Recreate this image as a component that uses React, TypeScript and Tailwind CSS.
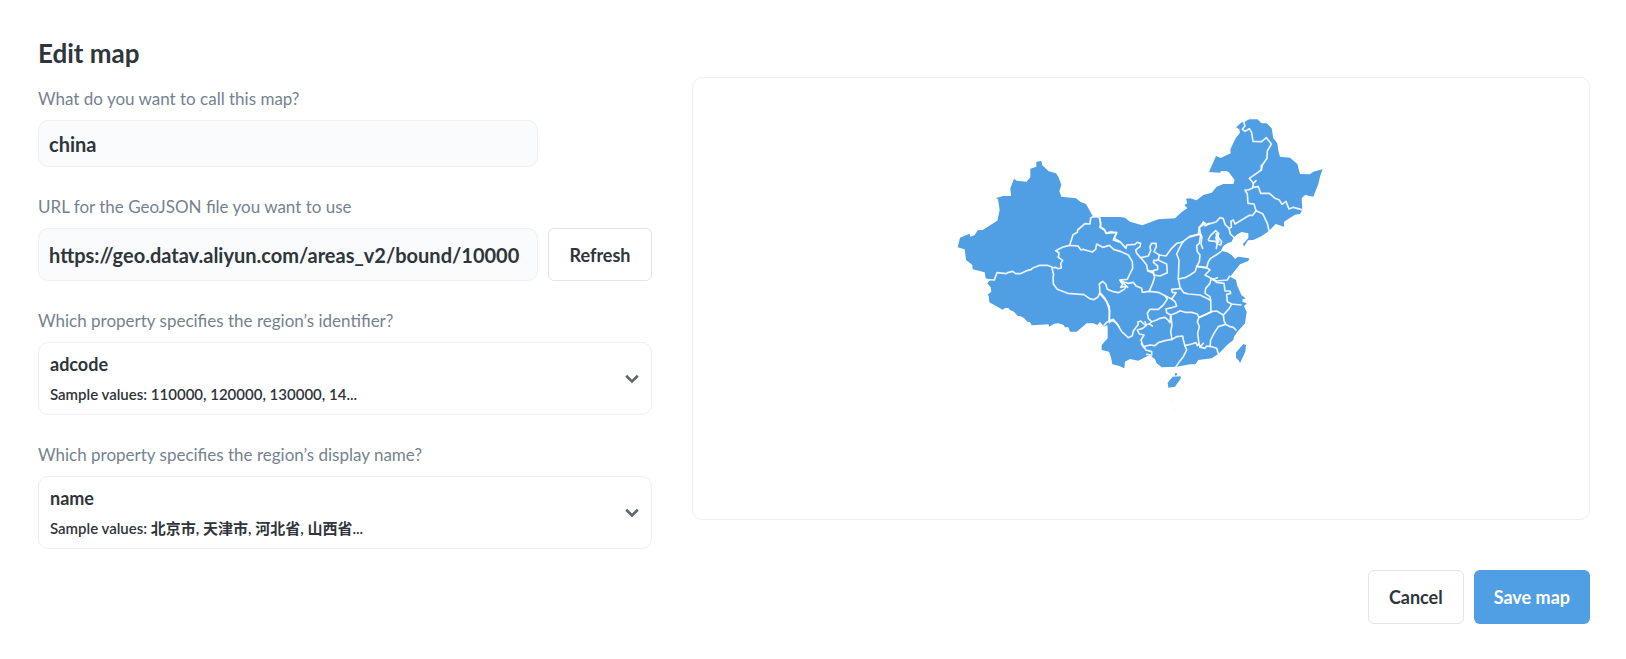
import { useState } from "react";
import type { ReactNode } from "react";

const labelClass = "block text-[17px] leading-[26px] text-[#74838f]";
const inputClass =
  "block w-full max-w-[500px] min-w-0 rounded-[10px] border border-[#eeeff1] bg-[#f9fbfc] px-[10px] text-xl font-bold text-[#2e353b] outline-none focus:border-[#509ee3]";
const outlineButton =
  "shrink-0 rounded-md border border-[#e2e4e6] bg-white px-5 text-lg font-bold text-[#2e353b]";

function Field({ id, label, children }: { id: string; label: string; children: ReactNode }) {
  return (
    <div className="flex flex-col gap-2">
      <label htmlFor={id} className={labelClass}>
        {label}
      </label>
      {children}
    </div>
  );
}

function PropertySelect({ id, value, sample }: { id: string; value: string; sample: string }) {
  return (
    <div className="relative flex items-center justify-between rounded-[10px] border border-[#eeeff1] bg-white py-2 pr-3 pl-[11px] text-[#2e353b]">
      <div className="flex flex-col gap-[5px]" aria-hidden="true">
        <span className="text-lg leading-[26px] font-bold">{value}</span>
        <span className="text-[15px] leading-6 font-semibold">{sample}</span>
      </div>
      <svg className="h-[10px] w-[14px]" viewBox="0 0 14 10" fill="none" aria-hidden="true">
        <path d="M1.200 1.800 7 7.400l5.800-5.600" stroke="#5f666d" strokeWidth="2.600" />
      </svg>
      <select id={id} defaultValue={value} className="absolute inset-0 h-full w-full cursor-pointer opacity-0">
        <option value={value}>{value}</option>
      </select>
    </div>
  );
}

function ChinaMap() {
  return (
    <svg className="h-[320px] w-[400px] max-w-full" viewBox="3 0 1200 960" role="img" aria-label="china">
      <g fill="#509ee3">
        <path d="M53 412 60 383 88 371 92 380 104 375 113 361 128 360 172 332 179 300 174 268 168 264 190 258 213 258 211 235 222 206 230 212 260 215 271 202 271 176 289 170 289 155 304 153 307 166 326 184 348 190 355 200 364 224 358 244 364 260 408 265 422 276 438 282 458 318 480 321 540 321 555 323 570 335 607 346 655 328 705 325 725 306 742 295 733 285 742 280 738 266 750 265 770 271 790 255 815 248 830 230 850 222 880 222 884 210 866 186 858 183 843 183 840 188 807 186 828 138 842 144 872 130 871 118 887 85 900 68 898 58 888 52 905 37 912 37 928 28 952 28 965 40 980 40 995 55 1000 85 1012 100 1015 123 1020 140 1050 143 1058 150 1072 162 1080 192 1110 193 1120 185 1148 178 1140 200 1135 222 1120 260 1095 255 1085 265 1087 300 1080 312 1065 314 1032 335 1032 350 1007 342 988 362 965 378 940 390 924 391 912 410 909 402 925 384 925 370 905 366 890 374 879 386 875 395 862 400 850 408 843 422 865 428 877 437 885 447 895 440 928 445 925 453 908 460 900 463 888 478 870 500 888 510 892 528 900 545 904 555 917 565 908 568 907 575 920 580 912 589 920 605 915 640 906 650 892 665 882 680 880 690 862 704 850 717 835 732 815 745 775 750 766 763 750 763 710 770 665 772 650 760 645 748 630 735 615 742 595 752 570 747 555 755 553 775 538 768 517 763 513 742 507 725 485 720 485 705 503 685 503 655 502 645 492 650 480 635 472 645 460 640 440 640 410 665 390 665 385 652 375 652 370 644 355 640 342 641 328 650 326 643 275 646 270 636 262 635 252 624 240 618 234 619 222 605 210 600 205 594 195 594 188 599 148 577 146 557 142 555 154 545 152 532 142 520 150 510 137 505 134 487 98 478 97 465 78 450 74 418Z" />
        <path d="m890 725 20-23 8 3-2 20-16 35-3-8-9-9v-16Z" />
        <path d="m683 818 15-18 24-1v7l-17 24-20 3Z" />
        <path d="m704 790 6-1 2 6-7 2Z" />
        <path d="M693 874h2v3h-2ZM702 897h2v3h-2ZM708 963h4v3h-4Z" opacity=".3" />
      </g>
      <g fill="none" stroke="#fff" strokeWidth="5" strokeOpacity=".88" strokeLinejoin="round" strokeLinecap="round">
        <g transform="translate(0 120)">
          <path d="M137 389 163 390 171 368 199 371 203 368 218 364 227 371 241 371 260 362 273 359 277 355 299 346 322 346 336 351" />
          <path d="M389 286 399 254 412 247 413 240 435 221 450 222 452 204 459 200 477 201 482 220 481 230 493 238 500 250 511 245 530 249 520 270 537 276" />
          <path d="M389 286 369 291 347 302 357 308 356 318 354 321 368 331 362 341 364 354 355 356 346 352 336 354 341 375 339 380 340 402 352 418 383 430 432 434 449 446 461 449 474 441 479 430" />
          <path d="M389 286 414 288 423 300 429 298 457 306 467 298 470 282 488 292 508 286 521 298 540 304" />
          <path d="M479 430 500 455 509 482 508 512 499 518 492 526M508 512 520 508 538 530" />
        </g>
        <g transform="translate(420 270)">
          <path d="M60 55 62 75 60 82 73 90 78 100 110 97 102 115 120 125 138 145 140 135 165 133 172 127 182 130 180 140 167 150 170 160 184 175 200 195 203 212 220 220 224 232 218 250 208 273" />
          <path d="M120 154 145 165 157 185 158 205 148 225 142 238 120 240 128 252 122 262 138 258 133 268 115 278 100 275 82 268 77 252 68 244 58 252 60 280" />
          <path d="M120 240 132 246 145 250 160 247 168 258 185 265 187 277 208 274 235 277 255 287 275 297M122 246 133 252 143 262" />
          <path d="M184 173 205 168 212 152 210 140 215 130 228 130 229 140 222 155 238 165 258 168 275 145 290 130 308 126 325 112 355 103 362 105 358 82 370 68 375 78 388 70" />
          <path d="M238 165 235 178 228 182 222 180 220 187 233 198 233 208 220 212 222 225 240 228 262 218 260 192 245 185 235 180M203 212 220 214" />
          <path d="M308 126 298 145 290 162 297 180 295 235 300 262 311 278 325 282 360 285 385 297 392 302" />
          <path d="M362 105 358 130 350 137 352 155 360 165 358 185 350 200 345 215 330 225 315 233 295 237M350 200 380 204" />
          <path d="M300 266 275 268 277 277 288 278 275 297 285 305 290 318 275 323 258 327 260 338 272 345 270 368 262 358 255 352 240 355 230 360 215 365" />
          <path d="M255 287 262 297 250 315 235 328 210 328 202 340 205 355 215 365 208 372 217 378" />
          <path d="M272 345 290 338 300 332 315 337 335 337 352 342 357 352 393 337M272 345 276 375 272 395 276 418 290 410 308 408 310 420 315 437 335 432 348 428 352 437 357 432" />
          <path d="M357 352 352 365 358 380 353 400 357 432 360 442 370 430" />
          <path d="M88 368 88 320 75 295 62 280M90 365 98 362 110 370 125 395 145 413 157 407 160 393 175 373 173 366 182 363 195 375 208 372" />
          <path d="M195 365 199 376 188 385 172 390 178 402 192 405 183 420 190 440 210 435 225 437 235 428 255 422 276 418" />
          <path d="M190 440 198 450 215 455 215 465 200 463M184 432 196 446M315 437 320 450 310 470 298 485 285 505" />
        </g>
        <g transform="translate(600 360)">
          <path d="M170 108 200 113 205 95 212 85 228 75 243 65M200 113 210 120 195 135 213 145 228 153 262 150 268 139M215 150 232 143" />
          <path d="M213 145 210 160 197 175 195 190 210 200 212 212 213 245 180 262" />
          <path d="M213 245 230 243 250 255 268 235 275 222 262 215 260 193 272 190 270 183 255 183 252 160 230 157 220 148M275 222 303 225" />
          <path d="M250 255 252 272 257 283 270 290 280 292 288 300M257 283 235 290 222 310 212 330 210 350" />
          <path d="M178 344 183 352 195 355 200 348 215 350 230 355 235 371" />
        </g>
        <g transform="translate(750 0)">
          <path d="M162 38 165 48 157 58 165 64 178 56 185 68 189 94 215 95 229 83 244 102 232 123 231 145 217 165 214 180 178 205 190 220 188 234 175 240 165 240 172 252 174 280 192 282 198 302" />
          <path d="M214 166 214 180M190 220 198 212M188 232 205 230 212 250 238 250 255 265 268 270 276 283 288 274 297 297 310 292 335 299" />
          <path d="M198 302 218 311 232 340 237 362M198 302 188 316 178 316 135 342 130 330 123 334 124 352 117 355 105 343 100 326 90 323 78 336 50 344 40 336 38 346 28 352 25 372" />
          <path d="M117 355 121 372 132 382M0 379 30 372 36 380 33 402 38 415" />
          <path d="M55 388 62 376 77 362 86 370 84 381 95 395 92 405 82 402 76 394 56 392ZM77 382 82 398 79 415" />
          <path d="M80 372 85 395" strokeWidth="8" />
        </g>
      </g>
    </svg>
  );
}

export default function App() {
  const [name, setName] = useState("china");
  const [url, setUrl] = useState("https://geo.datav.aliyun.com/areas_v2/bound/10000");

  return (
    <main className="bg-white pt-[37px] pr-9 pb-9 pl-[38px] font-['Lato','Noto_Sans_CJK_SC',sans-serif]">
      <form onSubmit={(e) => e.preventDefault()}>
        <div className="flex gap-10">
          <div className="w-[614px] shrink-0">
            <h1 className="text-[26px] leading-8 font-bold text-[#2e353b]">Edit map</h1>
            <div className="mt-[17px] flex flex-col gap-[27px]">
              <Field id="name" label="What do you want to call this map?">
                <input
                  id="name"
                  type="text"
                  className={`${inputClass} h-[47px]`}
                  value={name}
                  onChange={(e) => setName(e.target.value)}
                />
              </Field>
              <Field id="url" label="URL for the GeoJSON file you want to use">
                <div className="flex gap-[10px]">
                  <input
                    id="url"
                    type="text"
                    className={`${inputClass} h-[53px]`}
                    value={url}
                    onChange={(e) => setUrl(e.target.value)}
                  />
                  <button type="button" className={`${outlineButton} flex-1`}>
                    Refresh
                  </button>
                </div>
              </Field>
              <Field id="identifier" label="Which property specifies the region’s identifier?">
                <PropertySelect id="identifier" value="adcode" sample="Sample values: 110000, 120000, 130000, 14..." />
              </Field>
              <Field id="display-name" label="Which property specifies the region’s display name?">
                <PropertySelect id="display-name" value="name" sample="Sample values: 北京市, 天津市, 河北省, 山西省..." />
              </Field>
            </div>
          </div>
          <div className="mt-10 flex min-w-0 flex-1 justify-center self-start rounded-[10px] border border-[#eeeff1] pt-8 pb-[89px]">
            <ChinaMap />
          </div>
        </div>
        <div className="mt-[21px] flex justify-end gap-[10px]">
          <button type="button" className={`${outlineButton} h-[54px]`}>
            Cancel
          </button>
          <button type="submit" className="h-[54px] rounded-md bg-[#509ee3] px-5 text-lg font-bold text-white">
            Save map
          </button>
        </div>
      </form>
    </main>
  );
}
